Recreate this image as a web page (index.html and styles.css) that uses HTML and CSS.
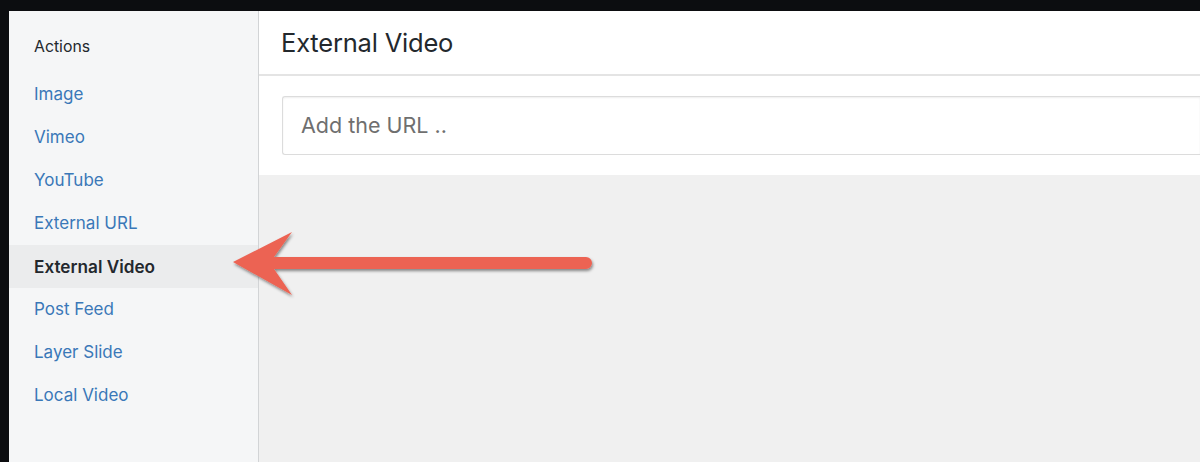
FILE: index.html
```html
<!DOCTYPE html>
<html>
<head>
<meta charset="utf-8">
<link rel="stylesheet" href="styles.css">
</head>
<body>
<div class="topbar"></div>
<div class="frame">
  <div class="strip"></div>
  <aside class="sidebar">
    <div class="sidebar-title">Actions</div>
    <ul class="menu">
      <li class="item">Image</li>
      <li class="item">Vimeo</li>
      <li class="item">YouTube</li>
      <li class="item">External URL</li>
      <li class="item active">External Video</li>
      <li class="item">Post Feed</li>
      <li class="item">Layer Slide</li>
      <li class="item">Local Video</li>
    </ul>
  </aside>
  <main class="main">
    <header class="header"><h1 class="title">External Video</h1></header>
    <section class="panel">
      <div class="url-input">Add the URL ..</div>
    </section>
    <div class="rest"></div>
  </main>
</div>
<svg class="arrow" width="380" height="80" viewBox="0 0 380 80">
  <defs>
    <filter id="sh" x="-10%" y="-30%" width="120%" height="160%">
      <feDropShadow dx="1" dy="2" stdDeviation="1.5" flood-color="#000" flood-opacity="0.45"/>
    </filter>
  </defs>
  <g filter="url(#sh)" fill="#ec6353">
    <path d="M3 38 L62 8 L44 33 L356 33 A6 6 0 0 1 356 45 L44 45 L62 71 Z"/>
  </g>
</svg>
</body>
</html>
```
FILE: styles.css
```css
html, body {
  margin: 0;
  padding: 0;
  width: 1200px;
  height: 462px;
  overflow: hidden;
  background: #0c0d10;
  font-family: "Inter", "Open Sans", sans-serif;
}
.topbar {
  height: 11px;
  background: #0c0d10;
}
.frame {
  display: flex;
  height: 451px;
}
.strip {
  width: 9px;
  flex: none;
  background: #0c0d10;
}
.sidebar {
  width: 250px;
  flex: none;
  background: #f5f6f7;
  border-right: 1px solid #d2d4d6;
  padding-top: 24px;
  box-sizing: border-box;
}
.sidebar-title {
  padding-left: 25px;
  font-size: 15.8px;
  color: #23282d;
  height: 24px;
  line-height: 24px;
  margin-bottom: 14px;
}
.menu {
  list-style: none;
  margin: 0;
  padding: 0;
}
.item {
  height: 43px;
  line-height: 43px;
  padding-left: 25px;
  font-size: 17px;
  color: #3a78b8;
}
.item.active {
  background: #ebeced;
  color: #23282d;
  font-weight: 600;
  font-size: 17.2px;
}
.main {
  flex: 1;
  display: flex;
  flex-direction: column;
  background: #f0f0f0;
}
.header {
  height: 65px;
  background: #fff;
  border-bottom: 2px solid #e4e4e4;
  box-sizing: border-box;
  padding-left: 22px;
  display: flex;
  align-items: center;
}
.title {
  margin: 0;
  font-size: 25.5px;
  font-weight: 400;
  color: #23282d;
  letter-spacing: -0.2px;
}
.panel {
  background: #fff;
  height: 99px;
  padding: 20px 0 0 23px;
  box-sizing: border-box;
}
.url-input {
  height: 59px;
  box-sizing: border-box;
  border: 1px solid #dcdcdc;
  border-right: none;
  border-radius: 3px 0 0 3px;
  box-shadow: inset 0 1px 2px rgba(0,0,0,0.07);
  padding-left: 18px;
  line-height: 57px;
  font-size: 21.5px;
  color: #6f6f6f;
}
.rest {
  flex: 1;
}
.arrow {
  position: absolute;
  left: 230px;
  top: 224px;
}
```
